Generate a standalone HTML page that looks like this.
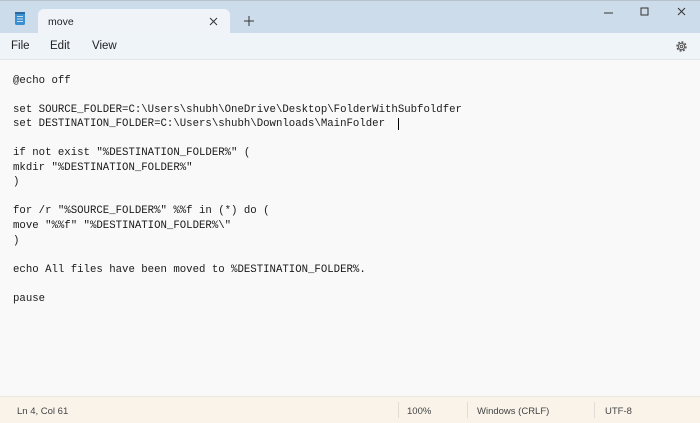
<html><head><style>
body{margin:0;width:700px;height:422px;overflow:hidden;background:#cfdde9;font-family:"Liberation Sans",sans-serif;position:relative}
.tb{position:absolute;left:0;top:0;width:700px;height:33px;background:#cddcea;border-top:1px solid #b8c2cc;box-sizing:border-box}
.tab{position:absolute;left:38px;top:8px;width:192px;height:26px;background:#f0f4f9;border-radius:6px 6px 0 0;font-size:10.5px;color:#222}
.menu{position:absolute;left:0;top:33px;width:700px;height:26px;background:#eff4f9;border-bottom:1px solid #e2e6ea;font-size:11.5px;color:#222}
.menu span{position:absolute;top:7px}
.ed{position:absolute;left:0;top:60px;width:700px;height:336px;background:#f9f9f9;font-family:"Liberation Mono",monospace;font-size:10.7px;color:#1a1a1a}
.ed pre{margin:0;position:absolute;left:13px;top:13.5px;font:inherit;line-height:14.55px}
.st{position:absolute;left:0;top:396px;width:700px;height:26px;background:#f9f3ea;border-top:1px solid #ece8e0;font-size:9.5px;color:#444}
.st span{position:absolute;top:9px}
.sep{position:absolute;top:5px;width:1px;height:16px;background:#e2ddd4}
</style></head><body>
<div class="tb">
<svg style="position:absolute;left:14px;top:11px" width="12" height="14"><rect x="1" y="1" width="10" height="12" rx="1.5" fill="#3a8fd0"/><rect x="3" y="4" width="6" height="1" fill="#cde"/><rect x="3" y="6.5" width="6" height="1" fill="#cde"/><rect x="3" y="9" width="6" height="1" fill="#cde"/><rect x="1" y="0" width="10" height="2" fill="#2a6aa0"/></svg>
<div class="tab"><span style="position:absolute;left:10px;top:7px">move</span>
<svg style="position:absolute;left:171px;top:8px" width="9" height="9"><path d="M1 1L8 8M8 1L1 8" stroke="#333" stroke-width="1"/></svg></div>
<svg style="position:absolute;left:244px;top:15px" width="10" height="10"><path d="M5 0V10M0 5H10" stroke="#333" stroke-width="1"/></svg>
<svg style="position:absolute;left:604px;top:11px" width="10" height="2"><path d="M0 1H9" stroke="#333"/></svg>
<svg style="position:absolute;left:640px;top:6px" width="10" height="10"><rect x="1" y="1" width="7" height="7" fill="none" stroke="#333"/></svg>
<svg style="position:absolute;left:677px;top:6px" width="10" height="10"><path d="M1 1L8 8M8 1L1 8" stroke="#333"/></svg>
</div>
<div class="menu"><span style="left:11px">File</span><span style="left:50px">Edit</span><span style="left:92px">View</span>
<svg style="position:absolute;left:675px;top:7px" width="13" height="13" viewBox="0 0 13 13"><circle cx="6.5" cy="6.5" r="4.5" fill="none" stroke="#555" stroke-width="1.4" stroke-dasharray="2 1.5"/><circle cx="6.5" cy="6.5" r="3.2" fill="none" stroke="#555"/><circle cx="6.5" cy="6.5" r="1.3" fill="none" stroke="#555"/></svg></div>
<div class="ed"><pre>@echo off

set SOURCE_FOLDER=C:\Users\shubh\OneDrive\Desktop\FolderWithSubfoldfer
set DESTINATION_FOLDER=C:\Users\shubh\Downloads\MainFolder  <span style="border-left:1px solid #000"></span>

if not exist "%DESTINATION_FOLDER%" (
mkdir "%DESTINATION_FOLDER%"
)

for /r "%SOURCE_FOLDER%" %%f in (*) do (
move "%%f" "%DESTINATION_FOLDER%\"
)

echo All files have been moved to %DESTINATION_FOLDER%.

pause</pre></div>
<div class="st"><span style="left:17px">Ln 4, Col 61</span><div class="sep" style="left:398px"></div><span style="left:407px">100%</span><div class="sep" style="left:467px"></div><span style="left:477px">Windows (CRLF)</span><div class="sep" style="left:594px"></div><span style="left:605px">UTF-8</span></div>
</body></html>
